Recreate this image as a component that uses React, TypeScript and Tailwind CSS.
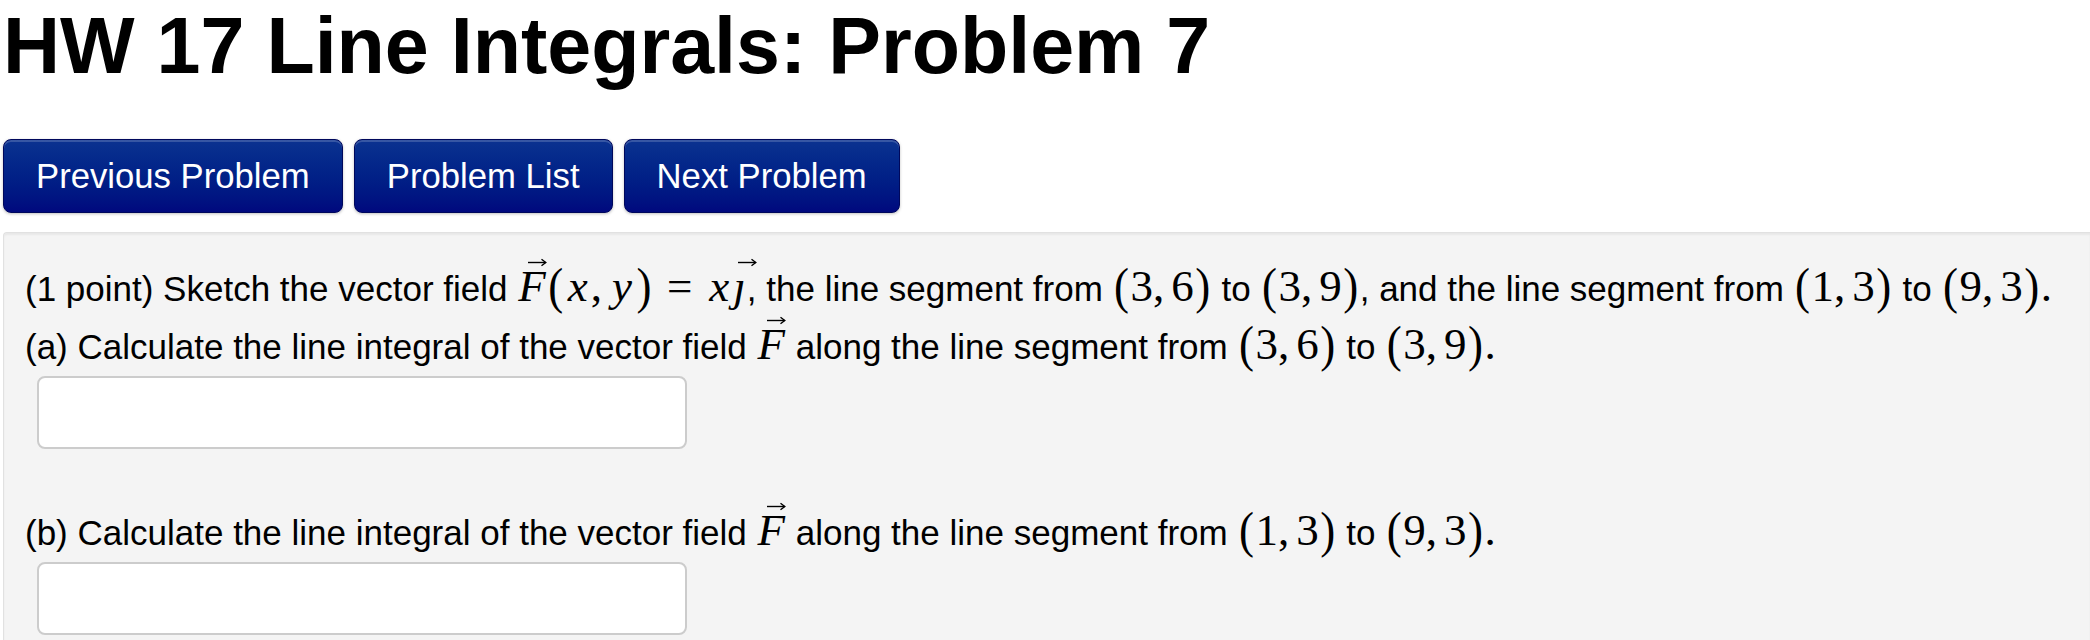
import React from 'react';

const sans = { fontFamily: '"Liberation Sans", Arial, sans-serif' };

function Arrow() {
  return (
    <svg
      className="pointer-events-none absolute left-[32%] top-[-6px] h-[9px] w-[20px]"
      viewBox="0 0 20 9"
      fill="none"
      stroke="black"
      strokeWidth="1.4"
    >
      <path d="M1 4.5H18.5" />
      <path d="M14.5 1.2L18.8 4.5L14.5 7.8" />
    </svg>
  );
}

// variable with vector arrow above
function Vec({ children }: { children: React.ReactNode }) {
  return (
    <span className="relative inline-block px-[1px] italic">
      {children}
      <Arrow />
    </span>
  );
}

function M({ children }: { children: React.ReactNode }) {
  return (
    <span className="font-['Liberation_Serif','DejaVu_Serif',serif] text-[45px] leading-none">
      {children}
    </span>
  );
}

// taller parentheses, closer to the math font of the page
function P({ c }: { c: string }) {
  return <span className="mx-[1.5px] inline-block scale-y-[1.12]">{c}</span>;
}

function V({ c, className = '' }: { c: string; className?: string }) {
  return <i className={`inline-block px-[3px] ${className}`}>{c}</i>;
}

function Pt({ a, b }: { a: string; b: string }) {
  return (
    <M>
      <P c="(" />
      {a},<span className="ml-[7px]">{b}</span>
      <P c=")" />
    </M>
  );
}

const buttons = ['Previous Problem', 'Problem List', 'Next Problem'];

export default function App() {
  return (
    <div className="h-[640px] w-[2090px] overflow-hidden bg-white pl-[3px] text-black" style={sans}>
      <h1 className="m-0 text-[79px] font-bold leading-[92px]">HW 17 Line Integrals: Problem 7</h1>

      <div className="mt-[47px] flex gap-[11px]">
        {buttons.map((b) => (
          <button
            key={b}
            className="flex h-[74px] items-center rounded-[8px] border border-[#00085c] bg-linear-to-b from-[#0b3290] to-[#00087e] px-[32px] text-[34.7px] leading-none text-white shadow-[inset_0_2px_0_rgba(255,255,255,0.18),0_1px_3px_rgba(0,0,0,0.25)]"
          >
            {b}
          </button>
        ))}
      </div>

      <div className="mt-[19px] h-[420px] rounded-tl-[4px] border-l border-t border-[#e1e1e1] bg-[#f4f4f4] pl-[21px] pt-[27px] text-[35px] leading-[58px] shadow-[inset_0_2px_2px_rgba(0,0,0,0.05)]">
        <div className="whitespace-nowrap">
          (1 point) Sketch the vector field{' '}
          <M>
            <Vec>F</Vec>
            <P c="(" />
            <V c="x" />,<V c="y" className="ml-[7px]" />
            <P c=")" />
            <span className="mx-[14px]">=</span>
            <V c="x" />
            <Vec>ȷ</Vec>
          </M>
          , the line segment from <Pt a="3" b="6" /> to <Pt a="3" b="9" />, and the line segment from{' '}
          <Pt a="1" b="3" /> to <Pt a="9" b="3" />
          <M>.</M>
        </div>
        <div className="whitespace-nowrap">
          (a) Calculate the line integral of the vector field{' '}
          <M>
            <Vec>F</Vec>
          </M>{' '}
          along the line segment from <Pt a="3" b="6" /> to <Pt a="3" b="9" />
          <M>.</M>
        </div>
        <input
          type="text"
          className="ml-[12px] block h-[73px] w-[650px] rounded-[8px] border-2 border-[#cccccc] bg-white outline-none"
        />
        <div className="mt-[55px] whitespace-nowrap">
          (b) Calculate the line integral of the vector field{' '}
          <M>
            <Vec>F</Vec>
          </M>{' '}
          along the line segment from <Pt a="1" b="3" /> to <Pt a="9" b="3" />
          <M>.</M>
        </div>
        <input
          type="text"
          className="ml-[12px] block h-[73px] w-[650px] rounded-[8px] border-2 border-[#cccccc] bg-white outline-none"
        />
      </div>
    </div>
  );
}
